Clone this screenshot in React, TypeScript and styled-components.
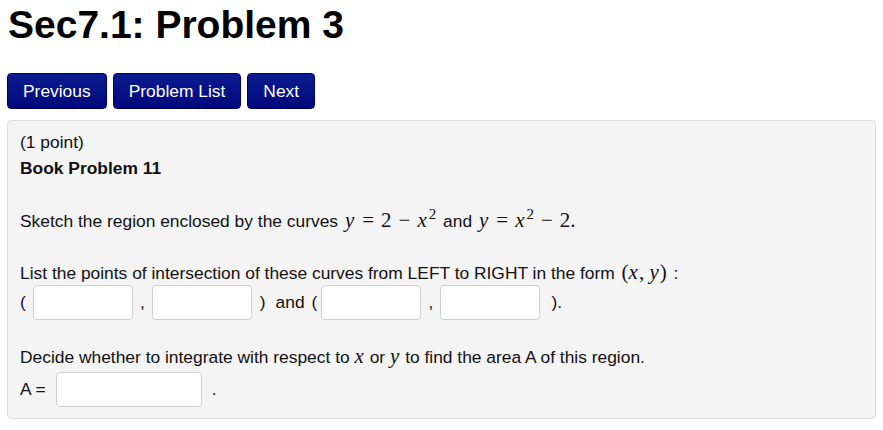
import React from "react";
import styled, { createGlobalStyle } from "styled-components";

const GlobalStyle = createGlobalStyle`
  body {
    margin: 0;
    background: #fff;
    font-family: "Liberation Sans", Arial, sans-serif;
    color: #111;
  }
`;

export default function App() {
  return (
    <Page>
      <GlobalStyle />
      <Title>Sec7.1: Problem 3</Title>
      <Nav>
        <NavButton>Previous</NavButton>
        <NavButton>Problem List</NavButton>
        <NavButton>Next</NavButton>
      </Nav>
      <ProblemBox>
        <Line>(1 point)</Line>
        <Line>
          <b>Book Problem 11</b>
        </Line>
        <Blank />
        <Line>
          Sketch the region enclosed by the curves{" "}
          <Math>
            <V>y</V>
            <Op>=</Op>2<Op>−</Op>
            <V>x</V>
            <Sup>2</Sup>
          </Math>{" "}
          and{" "}
          <Math>
            <V>y</V>
            <Op>=</Op>
            <V>x</V>
            <Sup>2</Sup>
            <Op>−</Op>2.
          </Math>
        </Line>
        <Blank />
        <Line>
          List the points of intersection of these curves from LEFT to RIGHT in
          the form{" "}
          <Math>
            (<V>x</V>, <V>y</V>)
          </Math>{" "}
          :
        </Line>
        <InputRow>
          <Token>(</Token>
          <AnswerInput $left={7} />
          <Comma>,</Comma>
          <AnswerInput />
          <Token $left={8}>)</Token>
          <Token $left={10}>and</Token>
          <Token $left={7}>(</Token>
          <AnswerInput $left={4} />
          <Comma>,</Comma>
          <AnswerInput />
          <Token $left={11}>).</Token>
        </InputRow>
        <Gap />
        <Line>
          Decide whether to integrate with respect to{" "}
          <Math $tight>
            <V>x</V>
          </Math>{" "}
          or{" "}
          <Math $tight>
            <V>y</V>
          </Math>{" "}
          to find the area A of this region.
        </Line>
        <InputRow $tall>
          <Token>A =</Token>
          <AnswerInput $wide $left={10} />
          <Token $left={10}>.</Token>
        </InputRow>
      </ProblemBox>
    </Page>
  );
}

const Page = styled.div`
  padding: 0 7px;
`;

const Title = styled.h1`
  font-size: 39px;
  font-weight: bold;
  margin: 0;
  padding: 2px 0 0 1px;
  line-height: 45px;
  color: #000;
`;

const Nav = styled.div`
  display: flex;
  gap: 6px;
  margin-top: 26px;
`;

const NavButton = styled.button`
  font-family: "Liberation Sans", Arial, sans-serif;
  font-size: 17.4px;
  color: #fff;
  height: 36px;
  padding: 0 15px;
  border: 1px solid #00005e;
  border-radius: 4px;
  background: linear-gradient(#0c1c91, #00087a);
`;

const ProblemBox = styled.div`
  margin-top: 11px;
  width: 869px;
  box-sizing: border-box;
  background: #f4f4f4;
  border: 1px solid #dedede;
  border-radius: 4px;
  padding: 8px 12px 9px 12px;
  font-size: 17.4px;
  line-height: 26px;
`;

const Line = styled.div`
  height: 26px;
  white-space: nowrap;
`;

const Blank = styled.div`
  height: 26px;
`;

const Gap = styled.div`
  height: 23px;
`;

const Math = styled.span<{ $tight?: boolean }>`
  font-family: "Liberation Serif", "Times New Roman", serif;
  font-size: 21px;
  margin: 0 ${(p) => (p.$tight ? "0" : "2px")};
`;

const V = styled.i`
  padding-right: 1px;
`;

const Op = styled.span`
  padding: 0 7px;
`;

const Sup = styled.sup`
  font-size: 15px;
  line-height: 0;
  vertical-align: 8px;
  padding-left: 1px;
`;

const InputRow = styled.div<{ $tall?: boolean }>`
  display: flex;
  align-items: center;
  height: ${(p) => (p.$tall ? "40px" : "36px")};
  margin-top: ${(p) => (p.$tall ? "0" : "-1px")};
`;

const Token = styled.span<{ $left?: number }>`
  margin-left: ${(p) => p.$left ?? 0}px;
`;

const Comma = styled.span`
  width: 19px;
  text-align: center;
`;

const AnswerInput = styled.input.attrs({ type: "text" })<{
  $wide?: boolean;
  $left?: number;
}>`
  box-sizing: border-box;
  width: ${(p) => (p.$wide ? "146px" : "100px")};
  height: 35px;
  margin-left: ${(p) => p.$left ?? 0}px;
  background: #fff;
  border: 1px solid #cfcfcf;
  border-radius: 4px;
`;
